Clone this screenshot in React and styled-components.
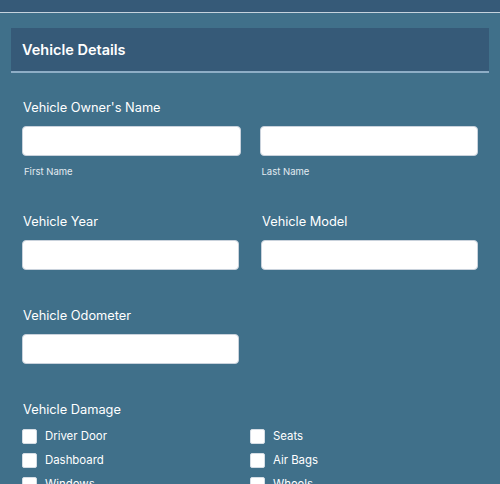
import React from 'react';
import styled, { createGlobalStyle } from 'styled-components';

const GlobalStyle = createGlobalStyle`
    body {
        margin: 0;
        background-color: #40708a;
        font-family: Inter, "Noto Sans", sans-serif;
        color: #ffffff;
    }
`

const TopBar = styled.div`
    height: 12px;
    background-color: #365a78;
    border-bottom: 1px solid #c5d3de;
`

const Page = styled.div`
    padding: 15px 11px 0;
`

const Header = styled.div`
    height: 43px;
    display: flex;
    align-items: center;
    padding: 0 11px;
    background-color: #365a78;
    border-bottom: 2px solid #8eaec6;
    font-size: 14.5px;
    font-weight: 600;
`

const Form = styled.div`
    padding: 27px 11px 0;
    display: flex;
    flex-direction: column;
`

const Row = styled.div`
    display: grid;
    grid-template-columns: 1fr 1fr;
    column-gap: ${props => props.gap || 20}px;
    margin-bottom: ${props => props.spacing || 38}px;
`

const Field = styled.div`
    display: flex;
    flex-direction: column;
`

const Label = styled.div`
    font-size: 12.8px;
    font-weight: 400;
    line-height: 16px;
    padding-left: 1px;
    margin-bottom: 10px;
`

const Input = styled.input`
    box-sizing: border-box;
    height: 30px;
    width: 100%;
    border: 1px solid #c9d2dc;
    border-radius: 4px;
    background-color: #ffffff;
`

const SubLabel = styled.div`
    font-size: 9.5px;
    line-height: 12px;
    color: #e3ebf1;
    padding-left: 2px;
    margin-top: 10px;
`

const CheckGrid = styled.div`
    display: grid;
    grid-template-columns: 1fr 1fr;
    grid-auto-rows: 24px;
    margin-top: -4px;
`

const CheckItem = styled.label`
    display: flex;
    align-items: center;
    gap: 8px;
    font-size: 11.4px;
`

const Box = styled.span`
    width: 15px;
    height: 15px;
    border-radius: 2px;
    background-color: #ffffff;
    border: 1px solid #d5dde5;
    box-sizing: border-box;
`

const damage = ['Driver Door', 'Seats', 'Dashboard', 'Air Bags', 'Windows', 'Wheels'];

const App = () => {
    return (
        <>
            <GlobalStyle />
            <TopBar />
            <Page>
                <Header>Vehicle Details</Header>
                <Form>
                    <Label>Vehicle Owner's Name</Label>
                    <Row gap={19} spacing={36}>
                        <Field>
                            <Input />
                            <SubLabel>First Name</SubLabel>
                        </Field>
                        <Field>
                            <Input />
                            <SubLabel>Last Name</SubLabel>
                        </Field>
                    </Row>
                    <Row gap={22}>
                        <Field>
                            <Label>Vehicle Year</Label>
                            <Input />
                        </Field>
                        <Field>
                            <Label>Vehicle Model</Label>
                            <Input />
                        </Field>
                    </Row>
                    <Row gap={22}>
                        <Field>
                            <Label>Vehicle Odometer</Label>
                            <Input />
                        </Field>
                    </Row>
                    <Label>Vehicle Damage</Label>
                    <CheckGrid>
                        {damage.map(item => (
                            <CheckItem key={item}>
                                <Box />
                                {item}
                            </CheckItem>
                        ))}
                    </CheckGrid>
                </Form>
            </Page>
        </>
    );
}

export default App;
